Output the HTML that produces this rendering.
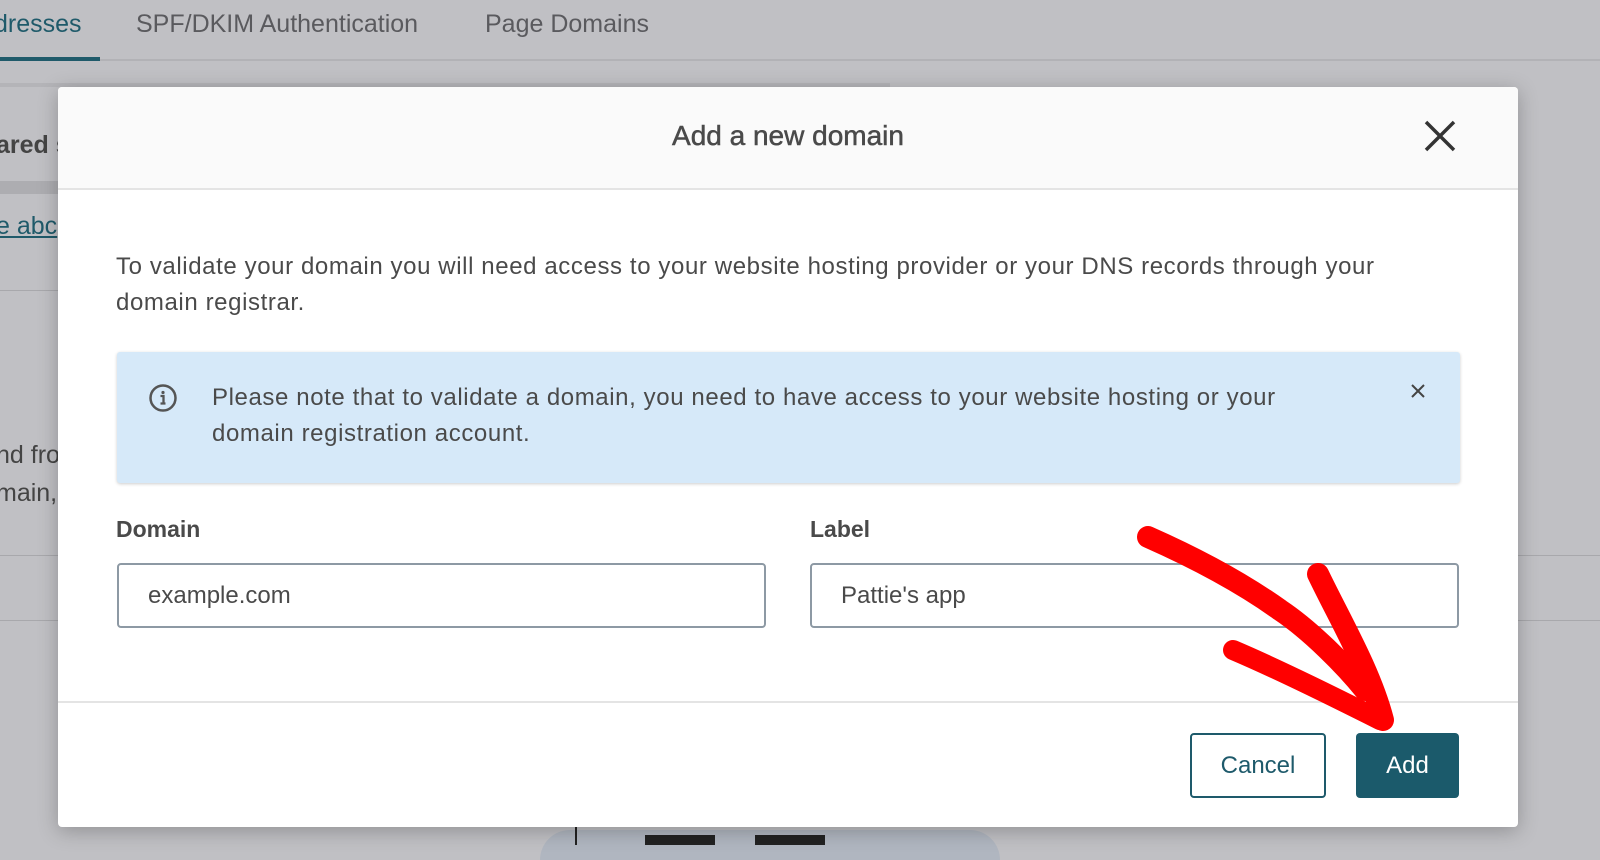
<!DOCTYPE html>
<html><head><meta charset="utf-8"><style>
*{margin:0;padding:0;box-sizing:border-box}
body{width:1600px;height:844px;overflow:hidden;background:#c0c0c4;font-family:"Liberation Sans",sans-serif;position:relative;color:#4a4a4a}
.a{position:absolute}
.t{font-size:25px;color:#5a5a5e;white-space:nowrap}
</style></head><body>
<div class="a t" style="left:-6px;top:10px;color:#1f5a6a">dresses</div>
<div class="a t" style="left:136px;top:10px">SPF/DKIM Authentication</div>
<div class="a t" style="left:485px;top:10px">Page Domains</div>
<div class="a" style="left:0;top:59px;width:1600px;height:2px;background:#b2b2b6"></div>
<div class="a" style="left:0;top:57px;width:100px;height:4px;background:#1f5a6a"></div>
<div class="a" style="left:0;top:83px;width:890px;height:4px;background:#b4b4b8"></div>
<div class="a t" style="left:-4px;top:131px;color:#444;font-weight:bold">ared s</div>
<div class="a" style="left:0;top:181px;width:60px;height:13px;background:#adadb1"></div>
<div class="a t" style="left:-4px;top:212px;color:#1f5a6a;text-decoration:underline">e abc</div>
<div class="a" style="left:0;top:290px;width:60px;height:1px;background:#a8a8ac"></div>
<div class="a t" style="left:-4px;top:441px;color:#444">nd fro</div>
<div class="a t" style="left:-4px;top:479px;color:#444">main,</div>
<div class="a" style="left:0;top:555px;width:60px;height:1px;background:#a8a8ac"></div>
<div class="a" style="left:0;top:620px;width:60px;height:1px;background:#a8a8ac"></div>
<div class="a" style="left:1518px;top:555px;width:82px;height:1px;background:#a8a8ac"></div>
<div class="a" style="left:1518px;top:620px;width:82px;height:1px;background:#a8a8ac"></div>
<div class="a" style="left:540px;top:830px;width:460px;height:30px;border-radius:40px 40px 0 0;background:#b0b6c0"></div>
<div class="a" style="left:575px;top:825px;width:2px;height:20px;background:#222"></div>
<div class="a" style="left:645px;top:835px;width:70px;height:10px;background:#222"></div>
<div class="a" style="left:755px;top:835px;width:70px;height:10px;background:#222"></div>

<div class="a" style="left:58px;top:87px;width:1460px;height:740px;background:#fff;border-radius:4px;box-shadow:0 4px 20px rgba(0,0,0,.25)">
  <div class="a" style="left:0;top:0;width:1460px;height:103px;background:#fafafa;border-bottom:2px solid #e4e4e4;border-radius:4px 4px 0 0"></div>
  <div class="a" style="left:0;top:33px;width:1460px;text-align:center;font-size:28px;color:#4a4a4a;-webkit-text-stroke:0.5px #4a4a4a">Add a new domain</div>
  <svg class="a" style="left:1365px;top:32px" width="34" height="34" viewBox="0 0 34 34"><path d="M3 3L31 31M31 3L3 31" stroke="#333" stroke-width="3.5"/></svg>
  <div class="a" style="left:58px;top:162px;width:1330px;font-size:24px;line-height:36px;letter-spacing:0.6px;color:#4a4a4a">To validate your domain you will need access to your website hosting provider or your DNS records through your domain registrar.</div>
  <div class="a" style="left:59px;top:265px;width:1343px;height:131px;background:#d6e9f9;border-radius:3px;box-shadow:0 1px 3px rgba(0,0,0,.2)">
    <svg class="a" style="left:31px;top:31px" width="30" height="30" viewBox="0 0 30 30"><circle cx="15" cy="15" r="12.5" fill="none" stroke="#555" stroke-width="2.5"/><circle cx="15" cy="9.5" r="1.6" fill="#555"/><path d="M12.5 13H15.5V20M12.5 20.5H17.5" stroke="#555" stroke-width="2.3" fill="none"/></svg>
    <div class="a" style="left:95px;top:28px;width:1120px;font-size:24px;line-height:36px;letter-spacing:0.6px;color:#4a4a4a">Please note that to validate a domain, you need to have access to your website hosting or your domain registration account.</div>
    <svg class="a" style="left:1293px;top:31px" width="16" height="16" viewBox="0 0 16 16"><path d="M2 2L14 14M14 2L2 14" stroke="#444" stroke-width="2"/></svg>
  </div>
  <div class="a" style="left:58px;top:429px;font-size:23px;font-weight:bold;color:#4a4a4a">Domain</div>
  <div class="a" style="left:752px;top:429px;font-size:23px;font-weight:bold;color:#4a4a4a">Label</div>
  <div class="a" style="left:59px;top:476px;width:649px;height:65px;border:2px solid #8d99a4;border-radius:4px;font-size:24px;padding:17px 0 0 29px;color:#4a4a4a">example.com</div>
  <div class="a" style="left:752px;top:476px;width:649px;height:65px;border:2px solid #8d99a4;border-radius:4px;font-size:24px;padding:17px 0 0 29px;color:#4a4a4a">Pattie's app</div>
  <div class="a" style="left:0;top:614px;width:1460px;height:2px;background:#e4e4e4"></div>
  <div class="a" style="left:1132px;top:646px;width:136px;height:65px;border:2px solid #1e5a6b;border-radius:4px;font-size:24px;color:#1e5a6b;text-align:center;line-height:61px">Cancel</div>
  <div class="a" style="left:1298px;top:646px;width:103px;height:65px;background:#1b5a6b;border-radius:4px;font-size:24px;color:#fff;text-align:center;line-height:65px">Add</div>
</div>
<svg class="a" style="left:0;top:0" width="1600" height="844"><g fill="none" stroke="#ff0000" stroke-linecap="round" stroke-linejoin="round">
<path d="M1148 537C1200 560 1245 585 1280 610C1310 630 1345 665 1365 690" stroke-width="22"/>
<path d="M1318 574C1340 620 1370 670 1383 720" stroke-width="22"/>
<path d="M1233 650C1280 670 1340 700 1380 720" stroke-width="20"/>
</g></svg>
</body></html>
